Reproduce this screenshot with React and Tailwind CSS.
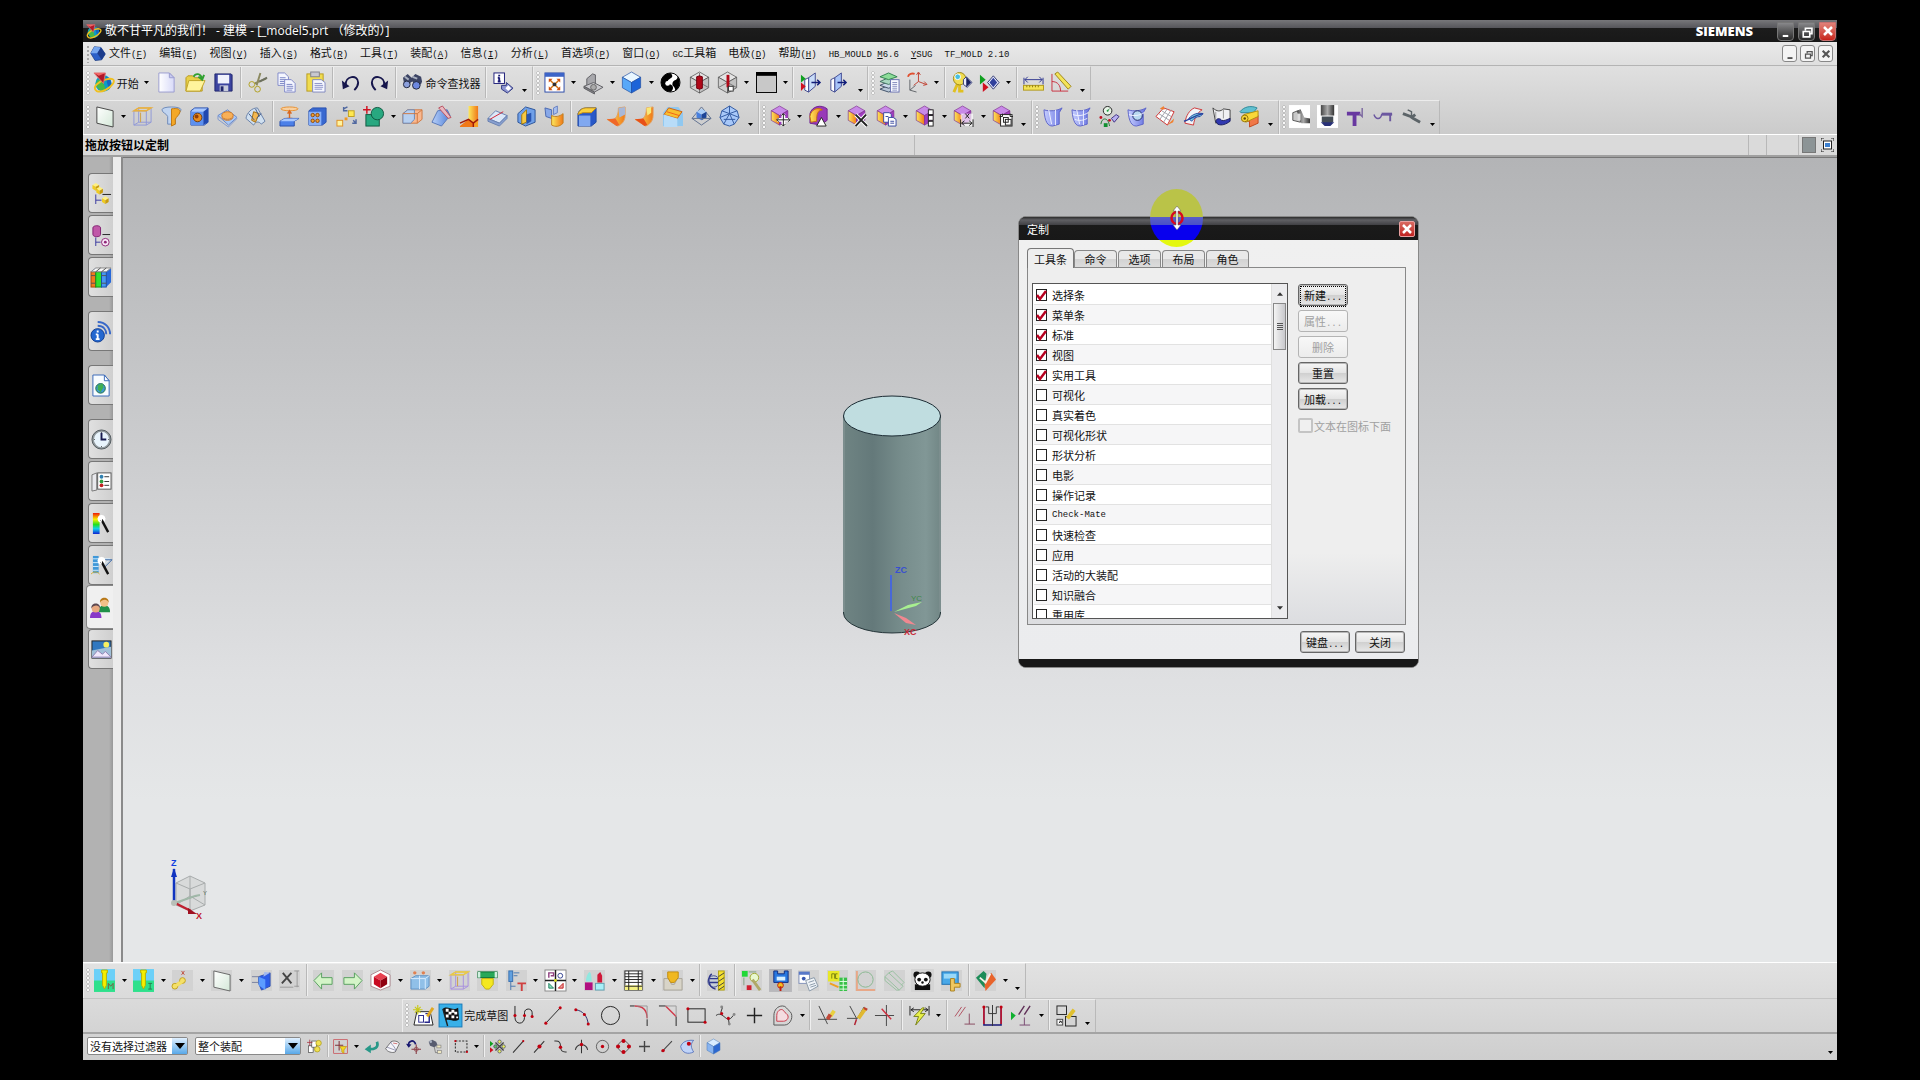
import React, { useState } from "react";

// small drawing helpers for the icon set, every icon sits in a 22x22 box
const F = (d, fill, stroke) => <path d={d} fill={fill} stroke={stroke} />;
const L = (d, stroke = "#222", w = 1) => (
  <path d={d} stroke={stroke} strokeWidth={w} fill="none" />
);
const C = (x, y, r, fill = "none", stroke) => (
  <circle cx={x} cy={y} r={r} fill={fill} stroke={stroke} />
);
const R = (x, y, w, h, fill = "none", stroke) => (
  <rect x={x} y={y} width={w} height={h} fill={fill} stroke={stroke} />
);
const cube = (x, y, r, t, l, s, line) => {
  const a = r * 0.87;
  const h = r / 2;
  return (
    <g stroke={line} strokeWidth="0.7" strokeLinejoin="round">
      <path d={`M${x} ${y - r}l${a} ${h}l${-a} ${h}l${-a} ${-h}z`} fill={t} />
      <path d={`M${x - a} ${y - h}l${a} ${h}v${r}l${-a} ${-h}z`} fill={l} />
      <path d={`M${x + a} ${y - h}l${-a} ${h}v${r}l${a} ${-h}z`} fill={s} />
    </g>
  );
};
const dot = (x, y) => C(x, y, 1.6, "#c00010");
const nxCube = cube(10, 10, 10, "#c88ae8", "url(#gold)", "#a03cc0", "#803090");
const page = (x, y) => (
  <>
    {F(`M${x} ${y}h7l4 4v9h-11z`, "#f4f6ff", "#8088c8")}
    {L(`M${x + 2} ${y + 5}h6M${x + 2} ${y + 7}h7M${x + 2} ${y + 9}h7M${x + 2} ${y + 11}h6`, "#7a84c4")}
  </>
);
const wand = (
  <>
    {C(11, 6, 4, "#fff")}
    {L("M11 7l7 13", "#111", 2.5)}
    {L("M11 2v7M7 6h8", "#fff")}
  </>
);
const person = (x, y, skin, hair, shirt) => (
  <>
    {F(`M${x - 6} ${y + 10}c0-6 3-7 6-7s6 1 6 7z`, shirt)}
    {C(x, y, 4.2, skin)}
    {F(`M${x - 4.5} ${y}c-1-7 10-7 9 0c-1-2-2-3-4-3s-4 1-5 3z`, hair)}
  </>
);
const drill = (letter) => (
  <>
    {R(0, -1, 22, 14, "#6cd0f8")}
    {R(0, 11, 22, 12, "#2ee08c")}
    {F("M8 0h6v3h-1v13l-2 4l-2-4v-13h-1z", "#f4f000", "#b8b000")}
    {letter === "M"
      ? L("M15 20v-6l2.500 3l2.500-3v6", "#7a5a40")
      : L("M16 14h4M18 14v6M16 20h4", "#2a7a50")}
  </>
);
const wire = (top, side) => (
  <>
    {F("M2 5l5-3h13l-5 3z", "none", top)}
    {F("M2 5h13v15h-13zM7 2v15h13v-15M2 20l5-3M15 20l5-3", "none", side)}
    {L("M2 5l5-3h13l-5 3z", top, 1.5)}
    {L("M9 7v10", "#d0a040")}
  </>
);
const sheetPart = F("M1 4c6 2 14 1 19-2l-3 5v12l-7 2c-5 0-8-4-9-17z", "url(#violet)", "#5c64c8");
const bin = (
  <>
    {F("M1 6l5-4l4 4l4-4l6 3l1 5c-1 5-6 6-8 3l-2-3l-2 1c-1 4-6 4-7 0z", "#3c4464")}
    {C(5, 13, 3.5, "#8ca0dc", "#20263c")}
    {C(15, 14, 4, "#6d88e0", "#20263c")}
    {L("M3 5l4 3M11 5l5 2", "#a8b0c0", 2)}
  </>
);

const icons = {
  nx: (
    <>
      {C(11, 12, 8.5, "#0c9cc8")}
      {F("M5 8c4 0 8 5 8 12c-5 1-10-4-10-8z", "#48b848")}
      {F("M14 5c5 2 7 8 3 13c-2-5-3-8-3-13z", "#1466c4")}
      {L("M4 20c-6-4 2-10 9-12c6-2 11-1 8 4c-3 5-12 10-17 8", "#f0c020", 2)}
      {F("M1 1l12 0l-2 11z", "#b01828", "#e07070")}
      {F("M1 1l12 0l-7 3z", "#f06868")}
    </>
  ),
  new: <>{F("M3 1h11l5 5v15h-16z", "url(#paper)", "#9a9cd0")}{F("M14 1v5h5z", "#c8caf0", "#9a9cd0")}</>,
  open: (
    <>
      {F("M1 20v-14l2-2h5l2 2h8v14z", "#e8d048", "#b89820")}
      {F("M4 9h17l-5 11h-15z", "#fff49c", "#c0a428")}
      {L("M9 5c2-4 7-4 9 2M14 5l4 3l2-5", "#30a030", 2)}
    </>
  ),
  save: (
    <>
      {F("M2 2h17l1 1v17h-18z", "#3c44a0", "#20266c")}
      {R(5, 3, 12, 9, "#f0f2fc")}
      {R(7, 14, 9, 6, "#c8ccdc")}
      {R(8, 15, 3, 5, "#20266c")}
    </>
  ),
  cut: (
    <>
      {L("M13 1l-4 13M19 7l-12 5", "#8c8a60", 2)}
      {C(4, 13, 3, "none", "#b0a020")}
      {C(10, 18, 3, "none", "#b0a020")}
      {L("M12 10l8-4", "#6c7060", 2)}
    </>
  ),
  copy: <>{page(1, 1)}{page(8, 8)}</>,
  paste: (
    <>
      {R(2, 2, 17, 18, "#f0dc50", "#b89c20")}
      {R(6, 0, 9, 5, "#c8c8d0", "#80808c")}
      {F("M8 8h9l4 3v10h-13z", "#f6f8ff", "#8088c0")}
      {L("M10 12h8M10 14h9M10 16h9M10 18h8", "#8890c8")}
    </>
  ),
  undo: <>{L("M6 14c-1-10 13-12 13-3c0 4-2 6-4 8", "#16164c", 2)}{F("M2 9l1 9l7-3z", "#16164c")}</>,
  redo: <>{L("M16 14c1-10-13-12-13-3c0 4 2 6 4 8", "#16164c", 2)}{F("M20 9l-1 9l-7-3z", "#16164c")}</>,
  find: bin,
  info: (
    <>
      {R(1, 1, 11, 11, "#fff", "#1c1c78")}
      {L("M6.500 6v4M5 6h2M5 10h3M6.500 3v1.500", "#1c1c78", 2)}
      {F("M9 14h5v-3l7 6l-6 5l-6-4z", "#8c94d0", "#303880")}
      {F("M13 17l3-3l3 3l-3 3z", "#fff")}
    </>
  ),
  fit: (
    <>
      {R(1, 1, 20, 20, "#fff", "#2848a8")}
      {R(1, 1, 20, 4, "#3c64c8")}
      {L("M6 8l10 10M16 8l-10 10", "#d07010", 1.5)}
      {F("M5 7h4l-4 4zM17 7h-4l4 4zM5 19v-4l4 4zM17 19v-4l-4 4z", "#d05010")}
      {C(11, 13, 2, "#303030")}
    </>
  ),
  base: (
    <>
      {F("M4 7l6-5l3 1v10l-9 3z", "#a8a8ac", "#606064")}
      {F("M1 15l10-4l10 5l-9 5z", "#c8c8cc", "#606064")}
      {F("M1 15v2l11 6v-2z", "#808084", "#606064")}
      {C(11, 16, 3, "#aaa", "#666")}
    </>
  ),
  shaded: cube(11, 11, 11, "#e8f6ff", "#58a8f8", "#1c64d8", "#204ca0"),
  yin: (
    <>
      {C(11, 11, 10, "#fff", "#000")}
      {F("M11 1a10 10 0 0 0 0 20c4-3 3-7 0-8c-3-1-4-3-2-5c3-2 6-3 2-7z", "#000")}
      {F("M15 9c3-1 4-3 3-5c4 4 4 12-2 16c0-3-1-4-3-6c0-2 0-4 2-5z", "#000")}
      {C(8, 12, 2.500, "#fff")}
    </>
  ),
  section: (
    <>
      {cube(11, 11, 11, "#e4e4e4", "#d0d0d0", "#c0c0c0", "#444")}
      {L("M11 1v20M2 16l9-5l9 5", "#777")}
      {F("M8 5l3-1l3 1v12l-3 1l-3-1z", "#b00818", "#700010")}
    </>
  ),
  sectionEdit: (
    <>
      {cube(11, 11, 11, "#e4e4e4", "#d0d0d0", "#c0c0c0", "#444")}
      {L("M2 16l9-5l9 5", "#777")}
      {R(10, 3, 3, 13, "#b00818")}
      {R(12, 15, 5, 5, "#fff", "#333")}
    </>
  ),
  background: <>{R(0.5, 0.5, 21, 21, "#c8c8c8", "#000")}{R(0, 0, 22, 4, "#000")}</>,
  clipEdit: (
    <>
      {F("M9 6l7-5v14l-7 6z", "#c8dcf8", "#404890")}
      {F("M5 8l4-2v15l-4-2z", "#fff", "#404890")}
      {F("M1 3l5 4l-5 4z", "#10a020")}
      {F("M1 11l5 4l-5 5z", "#d01020")}
      {L("M12 11h9M18 8l3 3l-3 3", "#101c78", 1.5)}
    </>
  ),
  clip: (
    <>
      {F("M7 6l7-5v14l-7 6z", "#a8c4f8", "#404890")}
      {F("M3 8l4-2v15l-4-2z", "#fff", "#404890")}
      {L("M10 11h9M16 8l3 3l-3 3", "#101c78", 1.500)}
    </>
  ),
  layers: (
    <>
      {F("M1 18l9-4l9 4l-9 3z", "#b8c8d8", "#405068")}
      {F("M1 14l9-4l9 4l-9 3z", "#c8d8e8", "#405068")}
      {F("M1 10l9-4l9 4l-9 3z", "#a8d8c0", "#407060")}
      {F("M1 5l9-4l9 4l-9 3z", "#8cdc98", "#308050")}
      {R(12, 8, 9, 13, "#f8faff", "#6870b0")}
      {L("M14 11h5M14 13h5M14 15h5M14 17h5M14 19h5", "#8890c0")}
    </>
  ),
  wcs: (
    <>
      {L("M12 1v9l8 3M12 10l-5 4M18 10l3 3l-4 1M10 3l2-3l2 3", "#c04030")}
      {L("M3 8v11l7 2M3 19l6-5", "#606468")}
      {L("M1 5c1-3 4-4 7-3", "#e05030", 2)}
    </>
  ),
  setup: (
    <>
      {L("M7 12l-4 9M9 13v7h4", "#e0c020", 3)}
      {C(9, 7, 6.5, "#f0dc50", "#a08818")}
      {C(7, 5, 3, "#48c0e0", "#fff")}
      {F("M13 8l3-3l6 6l-5 5l-4-3z", "#e8ecff", "#303870")}
      {F("M16 5l5 6l-5 5z", "#182060")}
    </>
  ),
  play: (
    <>
      {F("M1 3l6 5l-6 5z", "#10a020")}
      {F("M4 11l6 5l-6 5z", "#d01020")}
      {F("M9 11l6-7l6 7l-6 7z", "#e8ecff", "#303870")}
      {F("M15 6l4 5l-4 5l-4-5z", "#30409c")}
    </>
  ),
  measure: (
    <>
      {L("M1 6v7M21 6v7M2 8h18M5 5l-3 3l3 3M17 5l3 3l-3 3", "#303890")}
      {R(0.5, 14, 21, 5, "#f4e458", "#b0981c")}
      {L("M4 14v2M7 14v2M10 14v2M13 14v2M16 14v2", "#8a7810")}
    </>
  ),
  angle: (
    <>
      {L("M1 2v18h17M1 10c6 0 9 4 9 10", "#c83040")}
      {F("M4 2l3-2l14 15l-3 3z", "#f4e458", "#9c8418")}
    </>
  ),
  sheet: <>{F("M3 1l17 4v17l-17-4z", "url(#sheetg)", "#444")}</>,
  wire: wire("#e8b040", "#9098d8"),
  revolve: (
    <>
      {F("M1 4c0-4 20-4 20 0c0 3-5 4-6 7v8h-8v-8c-1-3-6-4-6-7z", "#c0d4f0", "#6c88b8")}
      {F("M11 3c6-1 9 0 9 3c-1 4-4 5-5 8v5l-4 2z", "#f4a828", "#c07810")}
    </>
  ),
  hole: <>{F("M2 5l4-3h14v15l-4 3h-14z", "#a8c8ff", "#2850b0")}{R(2, 6, 13, 14, "#5c90f0")}{F("M15 6l5-4v15l-5 3z", "#2048b0")}{C(9, 12, 4.5, "#e88c20", "#703c08")}{C(8, 11, 2, "#903c08")}</>,
  boss: (
    <>
      {F("M1 10l10-6l10 8l-9 8z", "#a8c8f8", "#6888c8")}
      {F("M1 10v4l11 8l9-9", "none", "#8098d0")}
      <ellipse cx="11" cy="10" rx="6" ry="4" fill="#f8b058" stroke="#d07820" />
      {L("M5 12c2 4 10 4 12 0", "#d07820")}
    </>
  ),
  emboss: (
    <>
      {F("M1 13c1-6 6-11 12-11l8 14l-4 3c-2-3-6-3-8 1z", "#d0e0f0", "#6880a8")}
      {F("M9 6l6 2l-4 9l-4-2z", "#f4b850", "#a06c10")}
      {L("M4 8l6 7M11 3l4 8M17 8l-5 5", "#405888")}
    </>
  ),
  offset: (
    <>
      <ellipse cx="11" cy="3" rx="9" ry="2" fill="#f8d0a0" stroke="#e89030" />
      {L("M11 5v8M9 8l2-3l2 3M8 13h6", "#d86820", 1.5)}
      {F("M1 16l5-3h15l-5 3v5h-15z", "#4c80e8", "#2c50a8")}
      {F("M1 16l5-3h15l-5 3z", "#a8c8ff")}
    </>
  ),
  pattern: (
    <>
      {F("M2 5l4-3h14v15l-4 3h-14z", "#3868d0", "#2850b0")}
      {R(2, 6, 13, 14, "#88b0f8")}
      {C(6, 9.500, 1.800, "#f0a030", "#904808")}
      {C(11, 9.500, 1.800, "#f0a030", "#904808")}
      {C(6, 15.500, 1.800, "#f0a030", "#904808")}
      {C(11, 15.500, 1.800, "#f0a030", "#904808")}
    </>
  ),
  move: (
    <>
      {R(1, 15, 6, 6, "#fff4a0", "#e09020")}
      {R(13, 5, 6, 6, "#ffe850", "#c0a020")}
      {R(9, 12, 3, 3, "#f09820")}
      {L("M8 3l4-2M8 1v4h4M18 15l3 3M21 14v4h-4", "#5068a0", 1.5)}
    </>
  ),
  unite: (
    <>
      {R(2, 9, 14, 12, "#28a880", "#105840")}
      {C(14, 8, 6.500, "#28a880", "#105840")}
      {L("M3 0v8M-1 4h8", "#d01020", 1.500)}
    </>
  ),
  block: (
    <>
      {F("M1 8l5-4h15v10l-5 4h-15z", "#f8b890", "#d07840")}
      {F("M1 8l5-4h7v10l-4 4h-8z", "#b8d0f0", "#6888b8")}
      {L("M1 8h15v10M16 8l5-4", "#d07840")}
    </>
  ),
  trim: (
    <>
      {F("M1 17l6-12l10-1l3 6l-9 11z", "url(#blue)", "#5878b8")}
      {F("M8 2l4-2l9 12l-3 1z", "#e8b8c0", "#b85060")}
    </>
  ),
  split: (
    <>
      {F("M10 0h10v16l-5 6l-5-6z", "url(#gold)")}
      {F("M1 21l9-7l5 4v4h-14z", "#f07818")}
      {F("M15 18l5-4v8h-5z", "#f8a028")}
      {L("M1 18l9-4l5 4l5-4M15 18v4", "#a01808", 1.5)}
    </>
  ),
  slab: (
    <>
      {F("M1 13l8-8l12 5l-8 8z", "#dce8f8", "#6880b0")}
      {F("M1 13v3l12 5l8-8v-3l-8 8z", "#88a0d0", "#6880b0")}
      {L("M3 14l14-8", "#d02030")}
    </>
  ),
  shell: (
    <>
      {F("M2 8l8-7l10 3v13l-10 4l-8-4z", "#70a0e8", "#2c5498")}
      {F("M6 9l5-5v13l-5 2z", "#f8c840", "#a07810")}
      {F("M11 9l5-2v9l-5 3z", "#2854b0")}
    </>
  ),
  wrap: (
    <>
      {F("M1 2l7 2v9l-6-2z", "#88a8e8", "#4868b0")}
      {F("M8 10c4 2 8 1 12-2v10c-4 4-8 4-12 2z", "url(#gold)", "#c08020")}
      {F("M10 2l4-2v7l-4 2z", "#a8c0f0", "#6880c0")}
    </>
  ),
  blend: (
    <>
      {F("M1 8c1-4 5-6 9-6h10v15l-5 4h-14z", "#2858c8", "#2048a0")}
      {F("M1 9c1-5 5-7 9-7h10l-5 5h-9z", "#f8d040", "#c89010")}
      {R(2, 10, 12, 11, "#80a8f0")}
    </>
  ),
  flange: <>{F("M1 14c8 2 12-2 12-12l7-1v9c0 6-4 10-8 11z", "url(#gold)", "#e0a060")}{F("M1 14l9-1l4 7l-3 1z", "#f06828")}{F("M13 2l7-1v8l-6 3z", "#a8b8d8")}</>,
  flange2: <>{F("M1 14c8 2 12-2 12-12l7-1v9c0 6-4 10-8 11z", "url(#gold)", "#e0a060")}{F("M1 14l9-1l4 7l-3 1z", "#e85018")}{F("M13 2l5-1v6l-4 3z", "#f8e878")}</>,
  chamfer: (
    <>
      {F("M1 7l5-6h11l5 6v14h-21z", "#90c8f0")}
      {F("M2 9l5-7l14 4l-5 7z", "#f8c030", "#d06010")}
      {F("M2 9l14 4v9h-14z", "#b8dcf8")}
      {L("M5 6l13 4", "#f06018")}
    </>
  ),
  draft: (
    <>
      {L("M11 1l-10 12l10 7l10-7z", "#607090")}
      {cube(11, 9, 6, "#a8ccf8", "#4880e0", "#1c4498")}
      {L("M1 13l20 0", "#607090")}
    </>
  ),
  gem: (
    <>
      {F("M11 0l8 5l2 7l-5 7l-5 2l-6-2l-4-7l2-7z", "#a8c8f8", "#3058a0")}
      {L("M3 5l8 3l8-3M11 8l-6 11M11 8l5 11M1 12l10-4l10 4M5 14h12M11 0v8", "#3058a0")}
    </>
  ),
  faceMove: <>{nxCube}{L("M14 8v13M7.500 14.500h13", "#fff", 4)}{L("M14 8v13M7.500 14.500h13M12 10l2-2l2 2M12 19l2 2l2-2M9 12.500l-2 2l2 2M19 12.500l2 2l-2 2", "#222")}</>,
  faceDraft: (
    <>
      {F("M1 8c2-8 12-10 18-5v12l-7 5l-11-2z", "#9838b8", "#702090")}
      {F("M1 11c1-8 9-10 13-7c-5 1-6 4-6 12l-6 1z", "url(#gold)", "#c07010")}
      {F("M13 12l5 9h-10z", "#fff", "#222")}
    </>
  ),
  faceDelete: <>{nxCube}{L("M9 9l12 12M20 9l-11 12", "#fff", 4)}{L("M9 9l12 12M20 9l-11 12", "#222", 2)}</>,
  faceCopy: <>{nxCube}{F("M8 7h6l2 2v8h-8z", "#fff", "#3848a0")}{F("M13 12h5l3 2v7h-8z", "#fff", "#3848a0")}{L("M15 16h4M15 18h4M10 11h3", "#3848a0")}</>,
  faceLayout: <>{nxCube}{R(14, 4, 5, 5, "#fff", "#222")}{R(14, 10, 5, 5, "#fff", "#222")}{R(14, 16, 5, 5, "#fff", "#222")}</>,
  faceDim: <>{nxCube}{R(8, 8, 13, 13, "#ffffffb0")}{L("M8 14v8M21 14v8M9 18h11M12 15.500l-3 2.500l3 2.500M17 15.500l3 2.500l-3 2.500M13 8l4 5M17 8l-4 5", "#222")}</>,
  faceSize: <>{nxCube}{R(9, 9, 12, 12, "#fff", "#222")}{R(12, 12, 5, 5, "none", "#222")}{R(14, 14, 6, 6, "none", "#222")}{L("M8 11h3M11 8v3M19 8v3M22 11h-3", "#222")}</>,
  ruled: <>{sheetPart}{L("M6 4l3 15M13 4l0 16", "#f0f2ff")}</>,
  mesh: <>{sheetPart}{L("M6 4l3 15M13 4l0 16M2 9c6 2 11 1 16-2M4 14c5 2 9 1 13-1", "#f0f2ff")}</>,
  curves: (
    <>
      {C(9, 5, 4.5, "#e8f4e8", "#222")}
      {L("M9 5l2-2M2 19c1-8 8-7 9 2", "#207830")}
      {C(9, 5, 1, "#20a040")}
      {F("M13 13l5-4l3 2l-5 6z", "#b8b0f0", "#403080")}
      {F("M5 18h4v4h-4z", "#109030")}
      {C(2, 12, 1.500, "#c01020")}
      {C(11, 15, 1.500, "#c01020")}
    </>
  ),
  trimSheet: <>{sheetPart}{C(11, 10, 5, "#b8d8f0", "#202868")}{L("M2 9c6 2 11 1 16-2", "#f0f2ff")}</>,
  grid: (
    <>
      {F("M1 11l8-9l11 4l-7 14z", "#fff", "#d03030")}
      {L("M4 8l11 7M7 5l10 6M5 14l8-11M9 17l8-13", "#a0a0a8")}
      {F("M5 3l4-3l1 4zM13 20l6-3l1-4z", "#f08030")}
    </>
  ),
  through: (
    <>
      {F("M2 18c1-8 5-14 10-16l8 2c-5 3-8 8-9 16z", "#f0f4f8", "#d03838")}
      {F("M6 13c5-5 9-6 15-5l-3 3c-4 0-7 2-9 5z", "#78d8e0", "#2840a0")}
      {L("M1 16c5-1 10-6 20-8", "#2840a0", 1.5)}
    </>
  ),
  roll: (
    <>
      {F("M2 2c4 4 8 4 11 1l7 1v10c-4 4-8 4-10 1l-5 3z", "#f0f0f4", "#444")}
      {L("M13 3v10M5 6v8", "#999")}
      {F("M5 16c1-4 5-3 6-1c3 1 6-1 9-2v3c-4 3-9 5-13 3z", "#3038b0", "#181c60")}
    </>
  ),
  unroll: (
    <>
      {F("M1 6c4-5 11-7 18-4l-4 5h-13z", "#60c0d0", "#308898")}
      {F("M9 10h11v8l-9 4v-6h-3z", "#f07848", "#c04820")}
      {F("M5 9l15-4v6l-13 6z", "#f8d838", "#b09010")}
      {C(6, 13, 3.500, "#f8d838", "#907008")}
      {C(6, 13, 1.300, "#604808")}
    </>
  ),
  electrode: <>{R(0, -1, 22, 24, "#fff")}{F("M4 7l8-3v13l-8-2z", "#c8c8c8", "#555")}{F("M8 5l5 0l3 7l6 1v5h-9z", "url(#steel)")}{R(9, 8, 3, 7, "#ddd")}</>,
  punch: <>{R(0, -1, 22, 24, "#fff")}{R(4, -1, 14, 11, "url(#steel)")}{F("M5 11h12v5l-2 3h-8l-2-3z", "#444c54")}{F("M4 17l14 0l-4 4h-6z", "#283078")}</>,
  gateT: <>{F("M2 6h14v4h-4v11h-4v-11h-6z", "#6838a0")}{L("M15 8l3 3v-9", "#7c68a0", 1.500)}</>,
  gateS: <>{L("M1 9c2 6 7 5 8 0l11 0", "#6c58a0", 1.500)}{F("M9 7h11v3h-11z", "#6c58a0")}{L("M18 8v8", "#6c58a0", 2)}</>,
  branch: <>{L("M2 8l8 3l3 2l7 4M11 12l4-3", "#5c6468", 3)}{L("M7 4l4 2l0 5", "#5c6468", 1.500)}</>,
  // bottom toolbar
  drillM: drill("M"),
  drillI: drill("I"),
  wrench: <>{L("M10 1l3 4M13 1l-3 4", "#c05040")}{L("M3 17l8-5", "#f0dc58", 4)}{C(3, 17, 3, "#f4e068", "#c0a020")}{C(11, 11, 3, "#f4e068", "#c0a020")}{L("M3 17l8-5", "#f4e068", 3)}</>,
  datum: <>{F("M3 1l17 4v17l-17-4z", "url(#sheetg)", "#666")}</>,
  tool: <>{F("M8 7l12-4v14l-9 4l-3-7z", "#2c5ce8", "#3050b0")}{F("M8 7l7 3v11l-7-5z", "#5c9cff")}{L("M1 7h8M1 13h7", "#7880a0")}{F("M14 2l6 1l-7 4z", "#a0b8f0")}</>,
  ax: <>{L("M4 3l9 11M13 3l-10 11", "#444", 2)}{L("M19 1v17M16 1h5M16 17h5M1 18h14", "#999")}</>,
  prev: F("M1 11l8-8v5h11v7h-11v5z", "#d4f4c8", "#58a060"),
  next: F("M21 11l-8-8v5h-11v7h11v5z", "#d4f4c8", "#58a060"),
  redCube: <>{F("M1 5v12l10 4l10-4v-12l-10-5z", "#fff", "#b08890")}{cube(11, 11, 8, "#e84050", "#c80820", "#900010")}</>,
  mould: <>{F("M1 9l5-3h14v11l-4 3h-15z", "#90c0e8", "#6090c0")}{L("M1 9h15l4-3M10 6v14M16 9v11", "#d8ecff")}{C(5, 3, 1.800, "#e08050")}{C(14, 3, 1.800, "#e08050")}</>,
  wireB: wire("#e8c848", "#a890e0"),
  nozzle: <>{R(1, 2, 20, 6, "#28a858", "#087030")}{R(1, 2, 2.500, 6, "#d0f0e0")}{R(18.500, 2, 2.500, 6, "#d0f0e0")}{F("M5 9h12v6l-4 5h-4l-4-5z", "#f4e820", "#c0b010")}</>,
  screwT: <>{R(3, 1, 4, 11, "#60a0e0", "#3870b0")}{L("M8 3h6M8 6h4M5 12v9M5 17h5", "#4878b0")}{L("M12 14h9M16.500 14v8", "#d04040", 2)}</>,
  four: <>{R(0, 0, 22, 22, "#fff", "#888")}{L("M11 0v22M0 11h22", "#202020", 1.500)}{L("M4 8v-5h5v3h-3", "#904080", 1.500)}{C(16, 6, 2.500, "none", "#304090")}{F("M4 19v-5l5 5z", "#90e0c0", "#208060")}{F("M14 19l5-5v5z", "#f0a0a0", "#c02020")}{C(11, 11, 1.500, "#e0e020")}</>,
  bottles: <>{R(1, 13, 8, 8, "#b01080")}{F("M2 12c0-6 3-10 4-10s2 4 2 10z", "#90e8e0")}{R(12, 14, 9, 7, "#a8f0f8", "#60a0b0")}{F("M14 13v-8l3-3l2 4v7z", "#d01838")}</>,
  table: <>{R(2, 1, 18, 20, "#fff", "#222")}{R(2, 16, 18, 5, "#f4f080")}{L("M2 4h18M2 7h18M2 10h18M2 13h18M2 17h18M6 1v20M16 1v20", "#222")}</>,
  mouldB: <>{F("M2 9h5l3 6h3l3-6h5v12h-19z", "#d8d4c8", "#a8a498")}{F("M6 2h11v6l-4 5h-4l-3-5z", "#f0b820", "#c08c10")}</>,
  twist: <>{C(7, 12, 6, "#c8d0d8", "#404c90")}{L("M3 9h9M3 13h9M5 4c-5 4-4 14 4 16", "#30388c", 1.500)}{R(12, 1, 6, 20, "#f4e030", "#b0a010")}{L("M12 7l6-4M12 12l6-4M12 17l6-4M12 21l6-4", "#404040")}</>,
  colorPick: <>{R(1, 1, 6, 6, "#20d838")}{R(6, 16, 5, 5, "#d02030")}{C(14, 8, 4.5, "#e8f8d0", "#a0a830")}{L("M12 10l8 11", "#b0a868", 3)}{L("M8 2h8M3 8v8", "#80a080")}</>,
  robot: <>{R(-1, -1, 24, 24, "#b8b8bc")}{F("M4 1h4v3h7v-3h4v12h-15z", "#2878e0", "#102c80")}{R(7, 7, 9, 4, "#d8f0ff")}{C(11, 16, 3, "#f0c020", "#c02010")}{L("M11 17v5", "#c02010", 2)}</>,
  sheets: <>{R(1, 2, 11, 12, "#fff", "#8090b8")}{R(1, 2, 11, 3, "#5878c8")}{C(6, 9, 2, "#3858b0")}{F("M8 11l9-3l4 9l-9 5z", "#f0f4f8", "#8898a8")}{L("M11 13l6-2M12 16l6-2M13 18l6-2", "#8898a8")}</>,
  film: <>{R(1, 1, 12, 11, "#e8e828")}{L("M5 9v-5h3v5M11 4h-2v5h2", "#788010")}{R(13, 8, 8, 14, "#38c048")}{L("M13 12h8M13 16h8M13 20h8M17 8v14", "#e8ffe8")}{L("M3 14l9 4", "#f0a020", 2)}</>,
  circleG: <>{L("M2 1v20h19", "#e8a888", 2)}{C(11, 10, 8, "none", "#88b890")}</>,
  coil: <>{L("M1 7l4-4l15 14l-4 4zM5 3l4-2l12 12l-3 3M1 7l0 4l12 10l3 0", "#98c0a0")}</>,
  panda: <>{R(-1, -1, 24, 24, "#d4d4d4")}{C(5, 5, 3.500, "#111")}{C(17, 5, 3.500, "#111")}{F("M3 21v-6h16v6z", "#111")}<ellipse cx="11" cy="10" rx="8" ry="7" fill="#fff" stroke="#111" />{C(7.500, 10, 2, "#111")}{C(14.500, 10, 2, "#111")}{C(11, 13, 1.300, "#111")}</>,
  screen: <>{R(1, 2, 17, 13, "#48a8e8", "#2070b0")}{R(3, 4, 13, 5, "#98d8f8")}{F("M10 9h4v5h6v4h-6v4h-4z", "#f0c860", "#a88020")}</>,
  carrot: <>{F("M1 8l8-7l3 3l-2 15z", "#1c8c58")}{F("M10 14l7-11l5 7l-11 12z", "#e8642c")}{L("M5 8l6 5l5-9", "#f4f0e8", 2)}</>,
  // sketch toolbar
  sketch: <>{F("M1 21l3-14h14l3 14z", "#fff", "#222")}{R(6, 11, 5, 7, "#fff", "#28288c")}{L("M13 9h4v9h-5", "#28288c", 1.5)}{L("M5 0v10M0 5h10M2 2l6 6M8 2l-6 6", "#c8c818", 1.2)}{L("M21 3l-6 9", "#e0a820", 3)}</>,
  flag: <>{R(-1, -1, 24, 24, "#38b0e8", "#1878b8")}{F("M3 4c5-4 10 3 16-1l1 12c-5 4-9-1-14 1z", "#111")}{F("M6 4h3v3h-3zM12 5h3v3h-3zM9 7h3v3h-3zM15 7h3v3h-3zM6 10h3v3h-3zM12 11h3v3h-3zM17 12h2v2h-2z", "#fff")}{L("M3 4l5 18", "#222", 1.5)}</>,
  profile: <>{L("M1 1v12c0 8 10 8 10 0v-5c0-5 8-5 8 0v4", "#222")}{dot(1, 11)}{dot(11, 11)}{dot(19, 12)}</>,
  line: <>{L("M3 19l15-16")}{dot(3, 19)}{dot(18, 3)}</>,
  arc: <>{L("M4 5c7 1 12 6 13 15", "#282868")}{dot(4, 5)}{dot(13, 10)}{dot(17, 20)}</>,
  circle: C(11, 11, 9.500, "none", "#222"),
  fillet: <>{L("M1 1h5M19 15v7")}{L("M6 1c9 0 13 4 13 13", "#d03848", 1.500)}{L("M8 1h11v13", "#999")}</>,
  chamferS: <>{L("M1 1h7M19 12v10")}{L("M8 1l11 11", "#d03848", 1.500)}{L("M8 1h11v11", "#999")}</>,
  rect: <>{R(2, 4, 18, 14, "none", "#222")}{dot(2, 4)}{dot(20, 18)}</>,
  spline: <>{L("M1 11c8-6 11 11 18 0M6 8l2-6M14 14l1 7", "#333")}{dot(7, 9)}{dot(14, 14)}{C(7, 2, 1.500, "#888")}{C(15, 20, 1.500, "#888")}{C(20, 10, 1.500, "#888")}</>,
  plus: L("M11 3v16M3 11h16", "#222", 1.500),
  offsetC: <>{F("M2 21v-10c0-6 4-10 9-10c4 0 4 3 8 6c4 4 1 14-6 14z", "none", "#555")}{F("M5 17v-6c0-5 4-7 6-6c2 1 2 3 4 4c4 3 1 8-3 8z", "#f4dce0", "#c83848")}</>,
  trimQ: <>{L("M2 1l9 19M1 15h20", "#444")}{L("M18 6l-4 6", "#e8d040", 4)}{L("M14 10l-3 5", "#c04838", 4)}</>,
  extendQ: <>{L("M4 1l7 13M1 14h11M12 14l7-12", "#444")}{L("M20 4l-7 10", "#e0b830", 4)}{L("M11 15l-2 6", "#b02030", 1.500)}{L("M21 3l-1 2", "#c04030", 4)}</>,
  corner: <>{L("M13 0v22M1 11h20", "#444")}{L("M8 4l10 11", "#d03040", 1.500)}</>,
  dims: <>{L("M1 1v10M21 1v10M2 5h18M5 3l-3 2l3 2M17 3l3 2l-3 2", "#222")}{F("M14 3l-9 9h5l-3 9l10-12h-5l4-6z", "#e8f048", "#788018")}</>,
  parallel: <>{L("M1 12l7-10M5 12l7-10", "#b05060")}{L("M16 9v11M11 20h11", "#884860")}</>,
  symmetric: <>{L("M2 2v19h18v-19", "#181878", 1.5)}{L("M2 2v18M20 2v18", "#d01020", 1.5)}{L("M11 0v22", "#333")}{L("M4 2h3v7h8v-7h3", "#333")}{dot(2, 2)}{dot(20, 2)}</>,
  autoCon: <>{F("M0 7l5 4l-5 5z", "#10b030")}{L("M8 10l6-9M14 10l6-9", "#603058", 1.500)}{L("M14 13v8M9 21h11", "#784870")}</>,
  window: <>{R(1, 1, 10, 9, "none", "#222")}{R(10, 12, 11, 10, "#d4d4d4", "#222")}{L("M19 5l-7 9", "#e0c030", 4)}{R(1, 15, 6, 6, "#fff", "#444")}{L("M3 19l2-2M3.500 17h2v2", "#222")}</>,
  // selection bar
  filterY: <>{R(2, 10, 7, 10, "#fff", "#444")}{R(7, 3, 7, 9, "#fff", "#444")}{C(17, 6, 4, "#f0e050", "#a89818")}{C(15, 15, 4, "#f0e050", "#a89818")}{L("M4 1v9M0 5h8", "#a02030")}</>,
  snapBox: <>{R(1, 1, 20, 20, "none", "#c84048")}{L("M9 3v14M3 9h12", "#803038", 1.500)}{F("M10 11h10l-4 5v5l-3-2v-3z", "#f4d820", "#c09010")}</>,
  back: <>{L("M19 4c3 9-4 11-11 11", "#289888", 4)}{F("M10 8v13l-9-6z", "#289888")}</>,
  clear: <>{F("M1 14l8-10c3-2 11-1 12 3l-6 12c-4 2-12 0-14-5z", "#f4f4f8", "#444")}{L("M9 4c-2 3 8 8 6 14M3 12l11 4", "#707098")}{L("M12 6l6 1", "#c04040")}</>,
  rotP: <>{L("M4 10c-2-8 9-10 10-2", "#181870", 2.500)}{F("M0 7l4 6l4-5z", "#181870")}{L("M15 8v14M8 15h14", "#883840", 1.500)}{C(15, 15, 3, "none", "#883840")}</>,
  findS: <>{F("M1 4l5-3l6 3l2 5l-5 3l-6-2z", "#585c70")}{C(4, 4, 2, "#a8b0c0")}{L("M9 11l2 9h4", "#666")}{R(13, 9, 6, 4, "#f0e8c0", "#888")}{R(14, 17, 6, 4, "#f0e8c0", "#888")}</>,
  marquee: <><rect x="2" y="3" width="17" height="16" fill="none" stroke="#333" strokeWidth="1.5" strokeDasharray="3 2" />{dot(2, 3)}{dot(19, 19)}</>,
  snapAll: <>{F("M0 3l5 4l-5 4z", "#10a020")}{F("M0 12l5 4l-5 4z", "#d01020")}{L("M8 5l12 12M20 5l-12 12", "#444", 2)}{C(14, 4, 2.500, "#e8f060", "#446")}{C(14, 18, 2.500, "#e8f060", "#446")}{C(8, 11, 2.500, "#60c060", "#446")}{C(20, 11, 2.500, "#e8f060", "#446")}</>,
  sEnd: <>{L("M3 20l15-17", "#333", 1.500)}{dot(18, 3)}</>,
  sMid: <>{L("M3 20l15-17", "#333", 1.500)}{C(11, 11, 3, "#c00010")}</>,
  sCtl: <>{L("M2 3c8-1 9 3 9 8s2 9 9 8", "#333", 1.5)}{C(11, 12, 2.500, "#c00010")}</>,
  sInt: <>{L("M11 1v20M2 16c2-10 16-10 18 0", "#333", 1.5)}{C(11, 8, 2.500, "#c00010")}</>,
  sCen: <>{C(11, 11, 9, "none", "#333")}{C(11, 11, 2.500, "#c00010")}</>,
  sQuad: <>{C(11, 11, 8, "none", "#333")}{C(11, 3, 3, "#c00010")}{C(11, 19, 3, "#c00010")}{C(3, 11, 3, "#c00010")}{C(19, 11, 3, "#c00010")}</>,
  sPt: L("M11 3v16M3 11h16", "#444", 2),
  sOn: <>{L("M4 19l15-16", "#444", 1.500)}{C(6, 17, 2.500, "#c00010")}</>,
  sFace: <>{F("M1 11c2-6 8-10 19-9c-5 5-4 11 0 17c-8 4-17 2-19-8z", "#c0d4f8", "#3858b0")}{C(13, 7, 3, "#c00010")}</>,
  sCube: cube(11, 11, 11, "#d8ecff", "#88b4f0", "#2c68d0", "#4878b8"),
  // resource bar
  assembly: <>{cube(5, 4, 4, "#fff080", "#f0cc20", "#c89c10")}{cube(9, 8, 4, "#fff080", "#f0cc20", "#c89c10")}{cube(15, 18, 4, "#fff080", "#f0cc20", "#c89c10")}{L("M12 12h9")}{L("M5 12v10M5 18h6", "#3838a0")}</>,
  partNav: <>{F("M2 3c0-3 8-3 8 0v7c0 3-8 3-8 0z", "#c058a8", "#802070")}{L("M12 10h8")}{L("M5 13v9M5 18h5", "#3838a0")}{C(15, 18, 4, "#f8e8f8", "#902878")}{C(15, 18, 1.500, "#902878")}</>,
  library: <>{F("M0 5l5-4h16v15l-5 5h-16z", "#2868d8")}{R(0, 5, 5, 16, "#f07820", "#a04808")}{R(5, 5, 6, 16, "#30e030", "#109010")}{R(11, 5, 5, 16, "#4898f0", "#1850a8")}{F("M0 5l5-4h16l-5 4z", "#f8f8f8", "#888")}{L("M5 5l5-4M11 5l5-4M0 9h5M0 17h5M11 9h5M11 17h5", "#555")}</>,
  news: <>{L("M7 1c8 0 13 6 13 13M7 5c6 0 9 4 9 9", "#3868c8", 2)}{C(7, 15, 7, "#2468d0", "#103c90")}{L("M7 14v5M5 19h4M5 14h2M7 10v2", "#fff", 2)}</>,
  web: <>{F("M2 0h12l5 6v16h-17z", "#f8fcff", "#3868b8")}{F("M14 0v6h5z", "#fff", "#3868b8")}{C(10, 14, 5, "#3c98d0", "#207040")}{F("M7 11l5-2l1 4l-3 5l-3-3z", "#40b050")}</>,
  clock: <>{C(11, 11, 10, "#90989c", "#50585c")}{C(11, 11, 8, "#e8f4fc")}{L("M11 4v7h5", "#181c50", 2)}{L("M11 4v-1M11 19v-1M3 11h1M18 11h1", "#444")}</>,
  process: <>{F("M1 4l5-2v18l-5 1z", "#e8e8ec", "#777")}{R(7, 2, 14, 17, "#fff", "#555")}{C(11, 6, 2, "#3080b0")}{C(11, 11, 2, "#30a040")}{C(11, 15, 2, "#c02020")}{L("M14 6h5M14 11h5M14 15h5", "#333")}</>,
  palette: <>{R(2, 0, 7, 22, "url(#rainbow)")}{wand}</>,
  material: <>{R(2, 1, 6, 18, "#4098d8")}{L("M2 4h6M2 8h6M2 12h6M2 16h6M8 4l12 0l-7 7", "#d0ecff")}{L("M10 5h12l-8 8", "#3868a8")}{L("M0 20c3-3 6-3 9 0", "#d8b030")}{wand}</>,
  roles: <>{person(15, 6, "#f0c088", "#b87818", "#209048")}{person(6, 12, "#e8a880", "#5c4850", "#8838c8")}</>,
  scene: <>{R(1, 2, 20, 18, "#3078c0", "#222")}{F("M1 12l20-4v12h-20z", "#a0c0d8")}{C(16, 6, 3, "#f8f060")}{F("M1 19l6-7l5 4l3-3l6 6z", "#f0e8fc", "#9080b0")}</>,
};

const Icon = ({ name, small, tint }) => (
  <svg
    viewBox="0 0 22 22"
    aria-hidden="true"
    className={`shrink-0 overflow-visible ${small ? "size-[15px]" : "size-[21px]"} ${tint ? "bg-[#d2d2d2]" : ""}`}
  >
    {icons[name]}
  </svg>
);

const Down = ({ low }) => (
  <svg viewBox="0 0 5 3" aria-hidden="true" className={low ? "w-[5px] h-[3px] mt-4" : "w-[5px] h-[3px]"}>
    <path d="M0 0h5l-2.500 3z" fill="#000" />
  </svg>
);

// "|" separator, "v" drop arrow, "V" overflow arrow, [icon, text] captioned button
const Item = ({ item, small, tint }) => {
  if (item === "|") return <span className="w-[5px] self-stretch flex justify-center"><i className="w-0.5 border-l border-[#b8b8b8] bg-[#efefef]" /></span>;
  if (item === "v") return <button aria-label="展开" className="w-[10px] h-6 flex items-center justify-center"><Down /></button>;
  if (item === "V") return <button aria-label="更多" className="w-[14px] h-6 flex items-center justify-center"><Down low /></button>;
  if (Array.isArray(item)) {
    return (
      <button className="flex items-center gap-[3px] px-[2px] whitespace-nowrap">
        <Icon name={item[0]} />
        {item[1]}
      </button>
    );
  }
  return (
    <button aria-label={item} className={small ? "w-[21px] flex justify-center" : "w-7 flex justify-center"}>
      <Icon name={item} small={small} tint={tint} />
    </button>
  );
};

const Toolbar = ({ items, className, tint }) => (
  <div className={`flex items-center justify-between pb-0.5 border-t border-l border-t-[#ececec] border-l-[#ececec] border-r border-r-[#b9b9b9] ${className}`}>
    <span className="w-[5px] h-6 ml-px bg-[radial-gradient(circle_at_3px_2px,#f8f8f8_1px,#a8a8a8_1px,transparent_2px)] bg-[length:6px_4px]" />
    {items.map((item, i) => (
      <Item key={i} item={item} tint={tint} />
    ))}
  </div>
);

const standard = [["nx", "开始"], "v", "new", "open", "save", "|", "cut", "copy", "paste", "|", "undo", "redo", "|", ["find", "命令查找器"], "|", "info", "V"];
const view = ["fit", "v", "base", "v", "shaded", "v", "yin", "section", "sectionEdit", "v", "background", "v", "|", "clipEdit", "clip", "V"];
const utility = ["layers", "wcs", "v", "|", "setup", "play", "v", "|", "measure", "angle", "V"];
const feature = ["sheet", "v", "wire", "revolve", "hole", "boss", "emboss", "|", "offset", "pattern", "move", "unite", "v", "block", "trim", "split", "slab", "shell", "wrap", "|", "blend", "flange", "flange2", "chamfer", "draft", "gem", "V"];
const sync = ["faceMove", "v", "faceDraft", "v", "faceDelete", "faceCopy", "v", "faceLayout", "v", "faceDim", "v", "faceSize", "V"];
const surface = ["ruled", "mesh", "curves", "trimSheet", "grid", "through", "roll", "unroll", "V"];
const mold = ["electrode", "punch", "gateT", "gateS", "branch", "V"];
const moldTools = ["drillM", "v", "drillI", "v", "wrench", "v", "datum", "v", "tool", "ax", "|", "prev", "next", "redCube", "v", "mould", "v", "wireB", "nozzle", "screwT", "v", "four", "v", "bottles", "v", "table", "v", "mouldB", "v", "|", "twist", "|", "colorPick", "robot", "sheets", "film", "circleG", "coil", "panda", "screen", "|", "carrot", "v", "V"];
const sketch = ["sketch", ["flag", "完成草图"], "profile", "line", "arc", "circle", "fillet", "chamferS", "rect", "spline", "plus", "offsetC", "v", "|", "trimQ", "extendQ", "corner", "|", "dims", "v", "|", "parallel", "symmetric", "autoCon", "v", "|", "window", "V"];
const snaps = ["filterY", "|", "snapBox", "v", "back", "clear", "rotP", "findS", "|", "marquee", "v", "|", "snapAll", "sEnd", "sMid", "sCtl", "sInt", "sCen", "sQuad", "sPt", "sOn", "sFace", "|", "sCube"];

const menus = [
  ["文件", "F"], ["编辑", "E"], ["视图", "V"], ["插入", "S"], ["格式", "R"], ["工具", "T"],
  ["装配", "A"], ["信息", "I"], ["分析", "L"], ["首选项", "P"], ["窗口", "O"],
  ["GC工具箱"], ["电极", "D"], ["帮助", "H"],
];

const rows = ["选择条", "菜单条", "标准", "视图", "实用工具", "可视化", "真实着色", "可视化形状", "形状分析", "电影", "操作记录", "Check-Mate", "快速检查", "应用", "活动的大装配", "知识融合", "重用库"];

const resources = [["assembly"], ["partNav"], ["library"], ["news", 1], ["web", 1], ["clock", 1], ["process"], ["palette"], ["material"], ["roles"], ["scene"]];

const Mono = ({ children }) => (
  <span className="font-['Liberation_Mono',monospace] text-[9px]">{children}</span>
);

const glyphs = {
  min: "M3 11h6",
  restore: "M5 5v-2h6v5h-2M3 6h6v5h-6z",
  close: "M2 2l8 8M10 2l-8 8",
};

const Glyph = ({ name, className }) => (
  <svg viewBox="0 0 12 12" aria-hidden="true" className={className}>
    <path d={glyphs[name]} fill="none" stroke="currentColor" strokeWidth={name === "restore" ? 1.5 : 2.5} />
  </svg>
);

const TitleBar = () => (
  <header className="h-[22px] flex items-center pl-[3px] text-white text-[12px] bg-[linear-gradient(#77777a,#55555a_8px,#1c1c1c_8px,#181818)]">
    <span className="w-[19px]"><Icon name="nx" small /></span>
    <h1 className="font-['Open_Sans','Noto_Sans_CJK_SC',sans-serif] whitespace-pre">敬不甘平凡的我们！ - 建模 - [_model5.prt （修改的）]</h1>
    <span className="ml-auto mr-6 font-['Open_Sans',sans-serif] font-extrabold text-[13px]">SIEMENS</span>
    <div className="flex gap-1 pr-px">
      <button aria-label="最小化" className="w-[17px] h-[19px] rounded-b-sm border border-[#777] bg-gradient-to-b from-[#88888b] to-[#2a2a2a] flex items-center justify-center"><Glyph name="min" className="size-[11px]" /></button>
      <button aria-label="还原" className="w-[17px] h-[19px] rounded-b-sm border border-[#777] bg-gradient-to-b from-[#88888b] to-[#2a2a2a] flex items-center justify-center"><Glyph name="restore" className="size-[13px]" /></button>
      <button aria-label="关闭" className="w-[17px] h-[19px] rounded-b-sm border border-[#c87070] bg-gradient-to-b from-[#e08078] to-[#c82018] flex items-center justify-center"><Glyph name="close" className="size-[12px]" /></button>
    </div>
  </header>
);

const MenuBar = () => (
  <nav className="h-6 flex items-center pl-[3px] bg-gradient-to-b from-[#e9e9e9] to-[#dfdfdf] border-b border-[#b4b4b4]">
    <span className="w-1 h-[18px] bg-[radial-gradient(circle_at_2px_2px,#a8a8a8_1px,transparent_1px)] bg-[length:4px_4px]" />
    <svg viewBox="0 0 22 22" aria-hidden="true" className="size-4 mr-[3px]">
      <path d="M1 10l5-9l9 1l6 9l-5 8l-9 1z" fill="#2c60c8" stroke="#183880" />
      <path d="M6 1l9 1l-5 8l-9 0z" fill="#78a8f0" />
      <path d="M10 10l5-8l6 9l-5 8z" fill="#1c3c8c" />
    </svg>
    <div className="flex items-center">
      {menus.map(([label, key]) => (
        <button key={label} className="mr-[12px] whitespace-nowrap">
          {label.startsWith("GC") ? <><Mono>GC</Mono>工具箱</> : label}
          {key && <Mono>(<u>{key}</u>)</Mono>}
        </button>
      ))}
      <button className="mr-3"><Mono>HB_MOULD <u>M</u>6.6</Mono></button>
      <button className="mr-3"><Mono><u>Y</u>SUG</Mono></button>
      <button><Mono>TF_MOLD 2.10</Mono></button>
    </div>
    <div className="ml-auto mr-1 flex gap-[3px] text-[#555]">
      {["min", "restore", "close"].map((g) => (
        <button key={g} aria-label={g} className="w-[15px] h-[17px] rounded-[3px] border border-[#888] bg-[#f4f4f4] flex items-center justify-center">
          <Glyph name={g} className="size-[10px]" />
        </button>
      ))}
    </div>
  </nav>
);

const Combo = ({ label, value, className }) => (
  <label className={`relative h-[18px] ${className}`}>
    <span className="sr-only">{label}</span>
    <select defaultValue={value} className="block w-full h-[18px] appearance-none bg-white border border-[#888] rounded-xs pl-0.5 text-[11px] leading-4">
      <option>{value}</option>
    </select>
    <svg viewBox="0 0 15 16" aria-hidden="true" className="absolute right-px top-px w-[15px] h-4 pointer-events-none">
      <rect width="15" height="16" fill="url(#combo)" />
      <path d="M3 5h10l-5 6z" fill="#000" />
    </svg>
  </label>
);

const Tick = ({ label, checked, onChange, disabled }) => (
  <label className={disabled ? "flex items-center gap-px text-[#a0a0a0] whitespace-nowrap" : "flex items-center gap-[5px]"}>
    <span className="relative flex">
      <input
        type="checkbox"
        checked={checked}
        onChange={onChange}
        disabled={disabled}
        className={disabled ? "appearance-none size-[15px] rounded-xs border-2 border-[#c4c4c4] bg-[#f0f0f0]" : "appearance-none w-[11px] h-3 border border-[#222] bg-white"}
      />
      {checked && (
        <svg viewBox="0 0 11 12" aria-hidden="true" className="absolute inset-0 w-[11px] h-3 pointer-events-none overflow-visible">
          <path d="M1 6l3 4l6-8" fill="none" stroke="#b80020" strokeWidth="2.500" />
        </svg>
      )}
    </span>
    {label}
  </label>
);

const Push = ({ children, disabled, focus }) => (
  <button
    disabled={disabled}
    className={`h-[22px] w-[50px] shrink-0 rounded-[3px] border p-px ${
      disabled
        ? "border-[#b4b4b4] text-[#a0a0a0] bg-gradient-to-b from-[#f8f8f8] to-[#ececec]"
        : "border-[#666] shadow-[inset_0_0_0_1px_#b8b8b8] bg-[linear-gradient(#f6f6f6,#e4e4e4_50%,#cfcfcf_50%,#e8e8e8)]"
    }`}
  >
    <span className={focus ? "block leading-4 border border-dotted border-black" : "block leading-[18px]"}>
      {children}
    </span>
  </button>
);

const dots = <Mono>...</Mono>;

const CustomizeDialog = () => {
  const [on, setOn] = useState(rows.map((_, i) => i < 5));
  const toggle = (i) => setOn(on.map((v, j) => (i === j ? !v : v)));

  return (
    <section className="absolute left-[895px] top-[58px] w-[401px] rounded-lg overflow-hidden border border-[#888] bg-[#1a1a1a]">
      <div className="h-[23px] flex items-center justify-between pl-2 pr-[3px] text-white bg-[linear-gradient(#2c2c2c,#606064_3px,#404044_8px,#1a1a1a_8px,#181818)]">
        <h2>定制</h2>
        <button aria-label="关闭" className="size-4 rounded-xs border border-[#e8a0a0] bg-gradient-to-b from-[#d86860] to-[#c02020] flex items-center justify-center">
          <Glyph name="close" className="size-[12px]" />
        </button>
      </div>
      <div className="bg-gradient-to-b from-[#f0f0f0] to-[#ebecee] px-2 pt-2 pb-[6px]">
        <div className="flex items-end" role="tablist">
          <button role="tab" aria-selected="true" className="relative z-10 -mb-px w-[47px] h-5 rounded-t border border-b-0 border-[#777] bg-[#eeeeee]">工具条</button>
          {["命令", "选项", "布局", "角色"].map((t) => (
            <button key={t} role="tab" aria-selected="false" className="w-[43px] mr-px h-[17px] rounded-t border border-b-0 border-[#888] bg-[linear-gradient(#e9e9e9_50%,#d2d2d2_50%,#dcdcdc)] flex items-center justify-center">{t}</button>
          ))}
        </div>
        <div className="mr-1 flex gap-[10px] border border-[#888] bg-[linear-gradient(#eeeeee_80%,#dcdde0)] h-[358px] pt-[15px] pl-1">
          <div className="w-[256px] h-[336px] flex border border-[#555] bg-white">
            <ul className="flex-1 overflow-hidden pt-px pl-px">
              {rows.map((row, i) => (
                <li key={row} className="h-5 pl-[2px] flex items-center border-b border-[#e2e2e2] odd:bg-white even:bg-[#f6f6f7]">
                  <Tick label={row === "Check-Mate" ? <Mono>{row}</Mono> : row} checked={on[i]} onChange={() => toggle(i)} />
                </li>
              ))}
            </ul>
            <div className="w-4 flex flex-col items-center bg-[#ececee] border-l border-[#e0e0e0] pb-2">
              <svg viewBox="0 0 5 3" aria-hidden="true" className="w-[6px] h-1 mt-2 mb-[7px]"><path d="M0 3h5l-2.500-3z" fill="#333" /></svg>
              <span className="w-[13px] h-[47px] border border-[#888] bg-gradient-to-r from-[#f4f4f4] to-[#c8c8cc] flex flex-col gap-px items-center justify-center">
                <i className="w-[6px] h-px bg-[#555]" />
                <i className="w-[6px] h-px bg-[#555]" />
                <i className="w-[6px] h-px bg-[#555]" />
                <i className="w-[6px] h-px bg-[#555]" />
              </span>
              <svg viewBox="0 0 5 3" aria-hidden="true" className="w-[6px] h-1 mt-auto"><path d="M0 0h5l-2.500 3z" fill="#333" /></svg>
            </div>
          </div>
          <div className="flex flex-col gap-1 pt-px">
            <Push focus>新建{dots}</Push>
            <Push disabled>属性{dots}</Push>
            <Push disabled>删除</Push>
            <Push>重置</Push>
            <Push>加载{dots}</Push>
            <div className="mt-1">
              <Tick label="文本在图标下面" checked={false} disabled />
            </div>
          </div>
        </div>
        <div className="flex justify-end gap-[5px] pt-[6px] pr-[5px]">
          <Push>键盘{dots}</Push>
          <Push>关闭</Push>
        </div>
      </div>
      <div className="h-2 bg-[#181818]" />
    </section>
  );
};

const Cylinder = () => (
  <svg viewBox="0 0 110 256" aria-hidden="true" className="absolute left-[715px] top-[236px] w-[110px] h-[256px]">
    <path d="M5.500 22v197a48.500 20 0 0 0 97 0v-197z" fill="url(#cyl)" stroke="#26363a" />
    <path d="M6 24v194M102 24v194" stroke="#7c8e8e" strokeWidth="2" />
    <ellipse cx="54" cy="22" rx="48.500" ry="20" fill="#c0dde0" stroke="#1c2c34" />
    <path d="M52 181l2 0v36h-2z" fill="#4868d8" />
    <path d="M56 218l14-7l14-3l-6 4z" fill="#a8f090" />
    <path d="M56 219l12 5l10 7l-10-2z" fill="#f08890" />
    <text x="57" y="179" fontSize="9" fontWeight="bold" fill="#3850d0" fontFamily="Liberation Sans">ZC</text>
    <text x="73" y="207" fontSize="8" fill="#408848" fontFamily="Liberation Sans">YC</text>
    <text x="66" y="241" fontSize="9" fontWeight="bold" fill="#c82838" fontFamily="Liberation Sans">XC</text>
  </svg>
);

const Triad = () => (
  <svg viewBox="0 0 44 66" aria-hidden="true" className="absolute left-[46px] bottom-[38px] w-[44px] h-[66px]">
    <g fill="#d8dada" stroke="#a8acac">
      <path d="M7 25l14-7l15 7v22l-15 6l-14-6z" />
      <path d="M7 25l14 6l15-6M21 31v22M21 18v20l15 9M21 38l-14 9" fill="none" />
    </g>
    <path d="M6 45l20-7l5-1" stroke="#a0b8a8" strokeWidth="2" />
    <path d="M5 45v-34" stroke="#1034c0" strokeWidth="2.500" />
    <path d="M2 19l3-9l3 9z" fill="#1034c0" />
    <path d="M6 45l16 8" stroke="#c02030" strokeWidth="2.500" />
    <path d="M19 50l9 6l-9 0z" fill="#a01020" />
    <circle cx="5" cy="45" r="3" fill="#b8c0b8" />
    <text x="2" y="8" fontSize="9" fontWeight="bold" fill="#1040e0" fontFamily="Liberation Sans">Z</text>
    <text x="27" y="61" fontSize="9" fontWeight="bold" fill="#c01828" fontFamily="Liberation Sans">X</text>
    <text x="34" y="37" fontSize="6" fill="#506850" fontFamily="Liberation Sans">Y</text>
  </svg>
);

// pointer highlight, the ring turns blue where it covers the dialog title
const Pointer = () => (
  <div className="absolute left-[1027px] top-[31px] w-[53px] h-[58px] rounded-[50%] pointer-events-none flex items-center justify-center bg-[linear-gradient(#bac348_28px,#5a60c8_28px,#4850c8_36px,#0800ee_36px,#0800ee_51px,#e4f810_51px)]">
    <svg viewBox="0 0 16 24" aria-hidden="true" className="w-4 h-6">
      <ellipse cx="8" cy="12" rx="5.500" ry="6" fill="none" stroke="#d80820" strokeWidth="2.500" />
      <path d="M8 0l4 5h-3v14h3l-4 5l-4-5h3v-14h-3z" fill="#fff" stroke="#555" strokeWidth="0.500" />
    </svg>
  </div>
);

const Defs = () => (
  <svg aria-hidden="true" className="absolute size-0">
    <defs>
      <linearGradient id="paper"><stop stopColor="#fff" /><stop offset="1" stopColor="#d8daf8" /></linearGradient>
      <linearGradient id="blue"><stop stopColor="#b8d0f8" /><stop offset="1" stopColor="#5080d8" /></linearGradient>
      <linearGradient id="gold"><stop stopColor="#fce85c" /><stop offset="1" stopColor="#f07818" /></linearGradient>
      <linearGradient id="violet"><stop stopColor="#c8d0ff" /><stop offset="1" stopColor="#6470e0" /></linearGradient>
      <linearGradient id="sheetg" x2="1" y2="1"><stop stopColor="#fff" /><stop offset="1" stopColor="#d4e8d8" /></linearGradient>
      <linearGradient id="steel"><stop stopColor="#444" /><stop offset="0.500" stopColor="#aaa" /><stop offset="1" stopColor="#333" /></linearGradient>
      <linearGradient id="combo" x2="0" y2="1"><stop stopColor="#e0f0ff" /><stop offset="1" stopColor="#58a8e8" /></linearGradient>
      <linearGradient id="rainbow" x2="0" y2="1">
        <stop stopColor="#f01808" /><stop offset="0.300" stopColor="#f8f000" /><stop offset="0.550" stopColor="#20e020" />
        <stop offset="0.750" stopColor="#10d0f0" /><stop offset="1" stopColor="#1020d0" />
      </linearGradient>
      <linearGradient id="cyl">
        <stop stopColor="#6f8483" /><stop offset="0.300" stopColor="#64797a" /><stop offset="0.600" stopColor="#778d8c" />
        <stop offset="0.850" stopColor="#819796" /><stop offset="1" stopColor="#728786" />
      </linearGradient>
    </defs>
  </svg>
);

const App = () => {
  return (
    <div className="min-h-screen bg-black px-[83px] py-5 flex flex-col font-['Noto_Sans_CJK_SC',sans-serif] text-[11px] leading-[14px] text-[#111]">
      <Defs />
      <TitleBar />
      <MenuBar />
      <div className="bg-gradient-to-b from-[#e0e0e0] to-[#cbcbcb]">
        <div className="h-[34px] flex">
          <Toolbar items={standard} className="w-[450px]" />
          <Toolbar items={view} className="w-[335px]" />
          <Toolbar items={utility} className="w-[223px]" />
        </div>
        <div className="h-[34px] flex">
          <Toolbar items={feature} className="w-[676px]" />
          <Toolbar items={sync} className="w-[273px]" />
          <Toolbar items={surface} className="w-[247px]" />
          <Toolbar items={mold} className="w-[161px]" />
        </div>
      </div>
      <div className="h-[23px] flex items-stretch bg-[#dadada] border-t border-t-white border-b-2 border-b-[#a0a0a0]">
        <p className="flex-1 self-center pl-0.5 text-[12px] font-bold text-black">拖放按钮以定制</p>
        <span className="w-[834px] border-l border-[#b8b8b8]" />
        <span className="w-[18px] border-l border-[#b8b8b8]" />
        <span className="w-8 border-l border-[#b8b8b8]" />
        <div className="w-[39px] border-l border-[#b8b8b8] flex items-center justify-around">
          <button aria-label="显示" className="w-[14px] h-4 bg-[#8c9496] border border-[#777]" />
          <button aria-label="全屏" className="flex">
            <svg viewBox="0 0 13 14" aria-hidden="true" className="w-[13px] h-[14px]">
              <path d="M0 3v-3h3M10 0h3v3M13 11v3h-3M3 14h-3v-3" fill="none" stroke="#222" />
              <rect x="2.500" y="3" width="8" height="8" fill="#fff" stroke="#222" />
              <rect x="4" y="5" width="5" height="4" fill="#3c80d0" />
            </svg>
          </button>
        </div>
      </div>
      <div className="flex-1 flex">
        <aside className="w-[30px] pt-4 pl-[5px] bg-[linear-gradient(90deg,#b2b2b2_26px,#999)] flex flex-col gap-0.5">
          {resources.map(([name, gap]) => (
            <button
              key={name}
              aria-label={name}
              className={`shrink-0 flex items-center justify-center ${gap ? "mt-3" : ""} ${
                name === "roles"
                  ? "h-11 -ml-0.5 -my-0.5 rounded-l bg-[#f0f0f0] border border-r-0 border-[#888]"
                  : "h-10 rounded-l border border-[#777] border-r-0 bg-gradient-to-r from-[#e0e0e0] to-[#cfcfcf]"
              }`}
            >
              <Icon name={name} />
            </button>
          ))}
        </aside>
        <div className="w-[10px] bg-[#ececec] border-r-2 border-[#8a8a8a]" />
        <main className="relative flex-1 overflow-hidden border-t border-[#777] bg-[linear-gradient(#b3b4b6,#c7c8ca_30%,#dfe0e2_65%,#e5e7e8_80%)]">
          <Cylinder />
          <Triad />
          <CustomizeDialog />
          <Pointer />
        </main>
      </div>
      <footer className="bg-gradient-to-b from-[#e2e2e2] to-[#cecece]">
        <div className="h-9 flex border-t border-white">
          <Toolbar items={moldTools} className="w-[943px]" tint />
        </div>
        <div className="h-[34px] flex border-t border-[#c4c4c4] pl-[319px]">
          <Toolbar items={sketch} className="w-[694px]" />
        </div>
        <div className="h-7 flex items-center justify-between border-t-2 border-[#a4a4a4] pl-1 pr-1 pb-0.5">
          <div className="flex items-center gap-[7px]">
            <Combo label="类型过滤器" value="没有选择过滤器" className="w-[101px]" />
            <Combo label="选择范围" value="整个装配" className="w-[106px]" />
            <div className="w-[420px] h-[22px] -ml-1 flex items-center justify-between">
              {snaps.map((s, i) => (
                <Item key={i} item={s} small />
              ))}
            </div>
          </div>
          <button aria-label="更多选项" className="mt-3"><Down /></button>
        </div>
      </footer>
    </div>
  );
};

export default App;
